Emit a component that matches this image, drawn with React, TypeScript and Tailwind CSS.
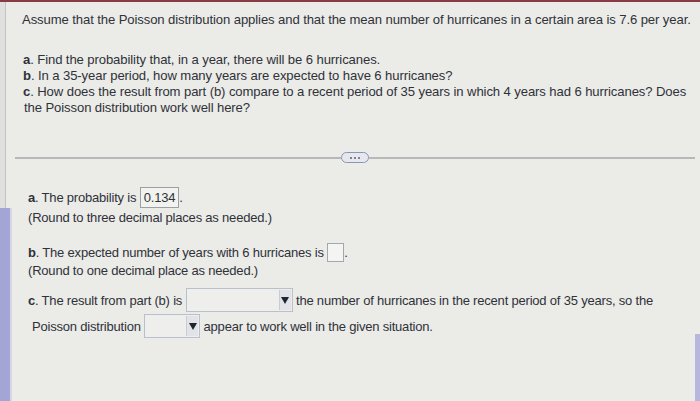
import React from 'react'

const Dropdown = ({ width }: { width: string }) => (
    <span className={`inline-flex items-center justify-end h-[24px] ${width} border border-[#b9bfcc] bg-[#eeeeec] align-middle`}>
        <span className="flex items-center justify-center w-[12px] h-[20px] mr-[1px] bg-[#e1e3e6] border-l border-[#c9ccd3]">
            <svg width="8" height="7" viewBox="0 0 8 7">
                <polygon points="0,0 8,0 4,7" fill="#1f2530" />
            </svg>
        </span>
    </span>
)

const App = () => {
    return (
        <div className="w-[700px] h-[401px] overflow-hidden bg-[#ebebe8] text-[#2f3238] flex flex-col font-['Liberation_Sans',Arial,sans-serif] border-t-[2px] border-[#8a3a44]">
            <div className="flex flex-1">
                {/* left rail */}
                <div className="w-[12px] flex flex-col">
                    <div className="h-[206px] flex">
                        <div className="w-[5px] bg-[#e0e0de]" />
                        <div className="w-[1px] bg-[#c4c4c4]" />
                        <div className="flex-1" />
                    </div>
                    <div className="flex-1 flex">
                        <div className="flex-1 bg-[#a3a6d4]" />
                        <div className="w-[2px] bg-[#d6d6e4]" />
                    </div>
                </div>
                <div className="flex-1 flex flex-col min-w-0">
                    {/* question */}
                    <div className="pl-[10px] pt-[10px] text-[13.1px] leading-[16px] tracking-[-0.1px] whitespace-nowrap">
                        <p>Assume that the Poisson distribution applies and that the mean number of hurricanes in a certain area is 7.6 per year.</p>
                        <div className="mt-[24px] pl-[1px]">
                            <p><span className="font-bold">a</span>. Find the probability that, in a year, there will be 6 hurricanes.</p>
                            <p><span className="font-bold">b</span>. In a 35-year period, how many years are expected to have 6 hurricanes?</p>
                            <p><span className="font-bold">c</span>. How does the result from part (b) compare to a recent period of 35 years in which 4 years had 6 hurricanes? Does</p>
                            <p className="pl-[1px]">the Poisson distribution work well here?</p>
                        </div>
                    </div>
                    {/* divider */}
                    <div className="mt-[36px] flex items-center">
                        <div className="w-[3px]" />
                        <div className="flex-1 h-[2px] bg-[#b8b8b8]" />
                        <div className="w-[28px] h-[11px] rounded-full border border-[#8a94b4] bg-[#e6e8ee] flex items-center justify-center gap-[2px]">
                            <span className="w-[2px] h-[2px] rounded-full bg-[#5b6275]" />
                            <span className="w-[2px] h-[2px] rounded-full bg-[#5b6275]" />
                            <span className="w-[2px] h-[2px] rounded-full bg-[#5b6275]" />
                        </div>
                        <div className="flex-1 h-[2px] bg-[#b8b8b8]" />
                    </div>
                    {/* answers */}
                    <div className="pl-[16px] pt-[24px] text-[13px] leading-[17px] tracking-[-0.2px] whitespace-nowrap">
                        <p className="flex items-center">
                            <span><span className="font-bold">a</span>. The probability is&nbsp;</span>
                            <span className="inline-flex items-center h-[21px] px-[3px] border border-[#9aa0a8] bg-[#f2f2ef]">0.134</span>
                            <span>.</span>
                        </p>
                        <p className="mt-[1px]">(Round to three decimal places as needed.)</p>

                        <p className="mt-[17px] flex items-center">
                            <span><span className="font-bold">b</span>. The expected number of years with 6 hurricanes is&nbsp;</span>
                            <span className="inline-block w-[17px] h-[19px] border border-[#a3a8b0] bg-[#f4f4f2]" />
                            <span>.</span>
                        </p>
                        <p>(Round to one decimal place as needed.)</p>

                        <p className="mt-[9px] flex items-center">
                            <span><span className="font-bold">c</span>. The result from part (b) is&nbsp;</span>
                            <Dropdown width="w-[107px]" />
                            <span>&nbsp;the number of hurricanes in the recent period of 35 years, so the</span>
                        </p>
                        <p className="flex items-center pl-[4px] mt-[2px]">
                            <span>Poisson distribution&nbsp;</span>
                            <Dropdown width="w-[56px]" />
                            <span>&nbsp;appear to work well in the given situation.</span>
                        </p>
                    </div>
                </div>
                <div className="w-[5px] flex flex-col">
                    <div className="h-[332px]" />
                    <div className="flex-1 bg-[#b6b6de]" />
                </div>
            </div>
        </div>
    )
}

export default App
